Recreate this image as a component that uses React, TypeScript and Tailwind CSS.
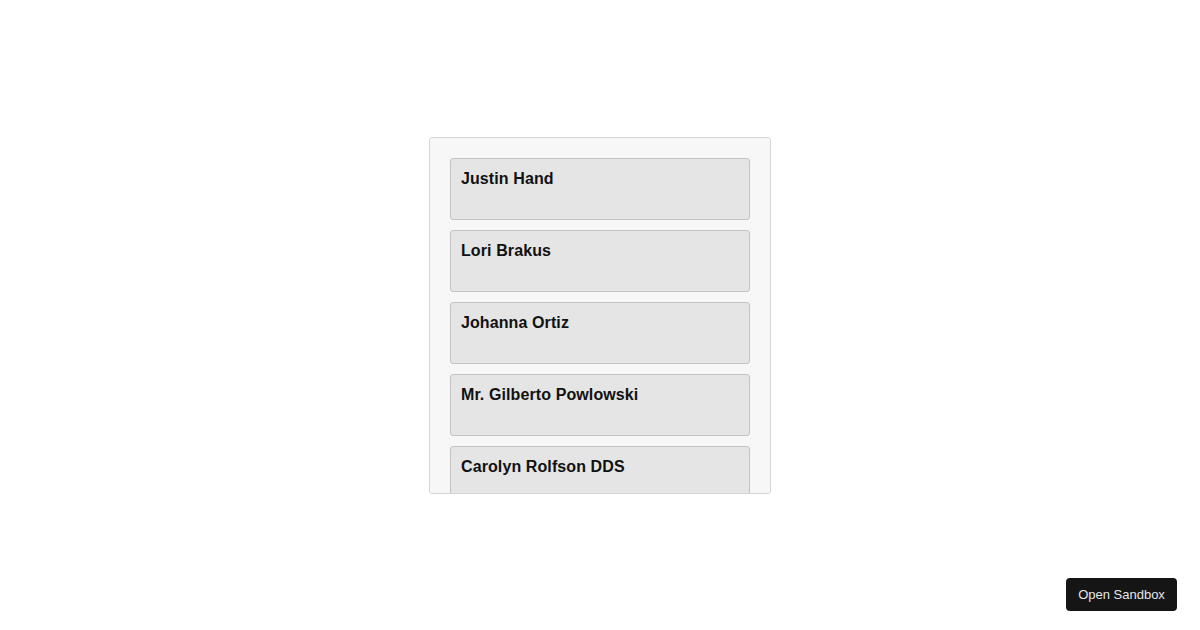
const people = [
  'Justin Hand',
  'Lori Brakus',
  'Johanna Ortiz',
  'Mr. Gilberto Powlowski',
  'Carolyn Rolfson DDS',
];

export default function App() {
  return (
    <div className="relative w-[1200px] h-[630px] bg-white font-['Liberation_Sans',Arial,sans-serif]">
      <div className="flex justify-center pt-[137px]">
        <div className="w-[342px] h-[357px] overflow-hidden rounded-[3px] border border-[#d6d6d6] bg-[#f7f7f7] px-[20px] pt-[20px]">
          <div className="flex flex-col gap-[10px]">
            {people.map((name) => (
              <div
                key={name}
                className="h-[62px] shrink-0 rounded-[3px] border border-[#c4c4c4] bg-[#e5e5e5] px-[10px] pt-[11px]"
              >
                <h4 className="text-[16px] font-bold leading-[18px] tracking-[0.1px] text-[#111]">{name}</h4>
              </div>
            ))}
          </div>
        </div>
      </div>

      {/* sandbox link */}
      <button className="absolute right-[23px] bottom-[19px] h-[33px] w-[111px] rounded-[4px] bg-[#151515] text-[13px] text-[#e6e6e6]">
        Open Sandbox
      </button>
    </div>
  );
}
